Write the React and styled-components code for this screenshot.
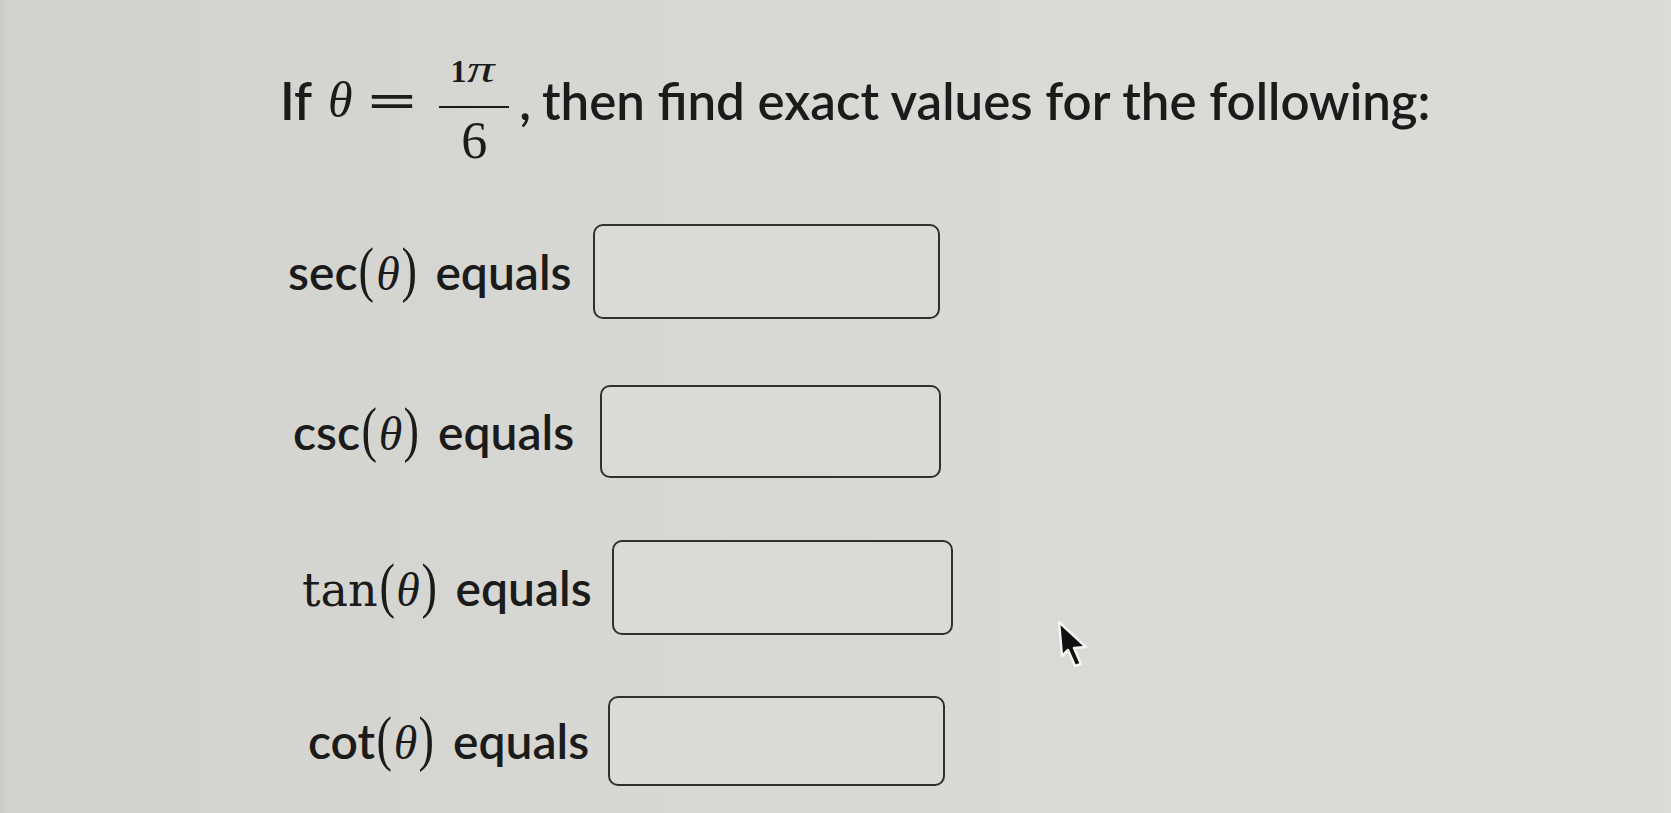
import React from "react";
import styled, { createGlobalStyle } from "styled-components";

const GlobalStyle = createGlobalStyle`
  html, body {
    margin: 0;
    padding: 0;
  }
  body {
    background: #d6d7d2;
    font-family: Lato, "Open Sans", sans-serif;
    color: #1b1b1b;
  }
`;

const Page = styled.div`
  position: relative;
  min-height: 813px;
  box-sizing: border-box;
  padding: 33px 0 0 280px;
  background: linear-gradient(90deg, #c8c9c4 0px, #d1d2cd 6px, #d6d7d2 30%, #dadbd6 70%, #dbdcd7 100%);
  overflow: hidden;
`;

const Question = styled.div`
  display: flex;
  align-items: center;
  font-size: 51px;
  font-weight: 600;
  line-height: 1;
  white-space: nowrap;
`;

const Word = styled.span`
  margin-right: ${(p) => p.$gap || 0}px;
`;

const MathVar = styled.span`
  display: inline-block;
  font-family: "Liberation Serif", "DejaVu Serif", serif;
  font-style: italic;
  font-weight: ${(p) => p.$weight || 400};
  font-size: ${(p) => p.$size || 50}px;
  transform: scaleX(${(p) => p.$stretch || 1});
  transform-origin: left center;
`;

const Relation = styled.span`
  display: inline-block;
  font-family: "DejaVu Serif", serif;
  font-weight: 400;
  font-size: 46px;
  transform: scaleX(1.4);
  transform-origin: left center;
  margin: 0 36px 0 12px;
`;

const Fraction = styled.span`
  display: inline-flex;
  flex-direction: column;
  align-items: center;
  margin-right: 10px;
  font-family: "Liberation Serif", "DejaVu Serif", serif;
  font-weight: 400;
`;

const Numerator = styled.span`
  font-size: 32px;
  line-height: 32px;
  padding: 20px 12px 19px 0;
  font-weight: 700;
`;

const Denominator = styled.span`
  font-size: 52px;
  line-height: 52px;
  padding-top: 7px;
`;

const FracBar = styled.span`
  display: block;
  width: 70px;
  height: 2px;
  background: #1b1b1b;
`;

const Rows = styled.div`
  display: flex;
  flex-direction: column;
  margin-top: 57px;
`;

const Row = styled.div`
  display: flex;
  align-items: center;
  padding-left: ${(p) => p.$indent}px;
  margin-top: ${(p) => p.$top}px;
`;

const Label = styled.div`
  display: flex;
  align-items: baseline;
  font-size: 48px;
  font-weight: 600;
  line-height: 1;
  white-space: nowrap;
  width: ${(p) => p.$width}px;
  padding-bottom: 6px;
`;

const Fn = styled.span`
  font-family: ${(p) => (p.$serif ? '"DejaVu Serif", "Liberation Serif", serif' : 'Lato, sans-serif')};
  font-weight: ${(p) => (p.$serif ? 400 : 600)};
  font-size: ${(p) => (p.$serif ? 46 : 48)}px;
`;

const Paren = styled.span`
  display: inline-block;
  font-family: "Liberation Serif", serif;
  font-weight: 400;
  font-size: 62px;
  line-height: 1;
  transform: scaleX(0.75);
  margin: 0 -1px;
`;

const Equals = styled.span`
  margin-left: 17px;
`;

const AnswerBox = styled.div`
  box-sizing: border-box;
  width: ${(p) => p.$w}px;
  height: ${(p) => p.$h}px;
  border: 2px solid #303030;
  border-radius: 10px;
  background: #dadbd6;
  flex-shrink: 0;
`;

const Pointer = styled.svg`
  position: absolute;
  left: 1055px;
  top: 619px;
  width: 38px;
  height: 54px;
`;

const rows = [
  { fn: "sec", indent: 8, label: 305, w: 347, h: 95, top: 0 },
  { fn: "csc", indent: 13, label: 307, w: 341, h: 93, top: 66 },
  { fn: "tan", indent: 22, label: 310, w: 341, h: 95, top: 62 },
  { fn: "cot", indent: 28, label: 300, w: 337, h: 90, top: 61 }
];

export default function App() {
  return (
    <>
      <GlobalStyle />
      <Page>
        <Question>
          <Word $gap={16}>If</Word>
          <MathVar>θ</MathVar>
          <Relation>=</Relation>
          <Fraction>
            <Numerator>
              1<MathVar $size={38} $stretch={1.45}>π</MathVar>
            </Numerator>
            <FracBar />
            <Denominator>6</Denominator>
          </Fraction>
          <Word $gap={11}>,</Word>
          <Word>then find exact values for the following:</Word>
        </Question>
        <Rows>
          {rows.map((r) => (
            <Row key={r.fn} $indent={r.indent} $top={r.top}>
              <Label $width={r.label}>
                <Fn $serif={r.fn === "tan"}>{r.fn}</Fn>
                <Paren>(</Paren>
                <MathVar $size={48}>θ</MathVar>
                <Paren>)</Paren>
                <Equals>equals</Equals>
              </Label>
              <AnswerBox $w={r.w} $h={r.h} />
            </Row>
          ))}
        </Rows>
        <Pointer viewBox="0 0 38 54">
          <path
            d="M4 3 L7 37 L13 31 L20 47 L26 45 L19 29 L31 28 Z"
            fill="#111"
            stroke="#f4f4f2"
            strokeWidth="2.5"
            strokeLinejoin="round"
          />
        </Pointer>
      </Page>
    </>
  );
}
